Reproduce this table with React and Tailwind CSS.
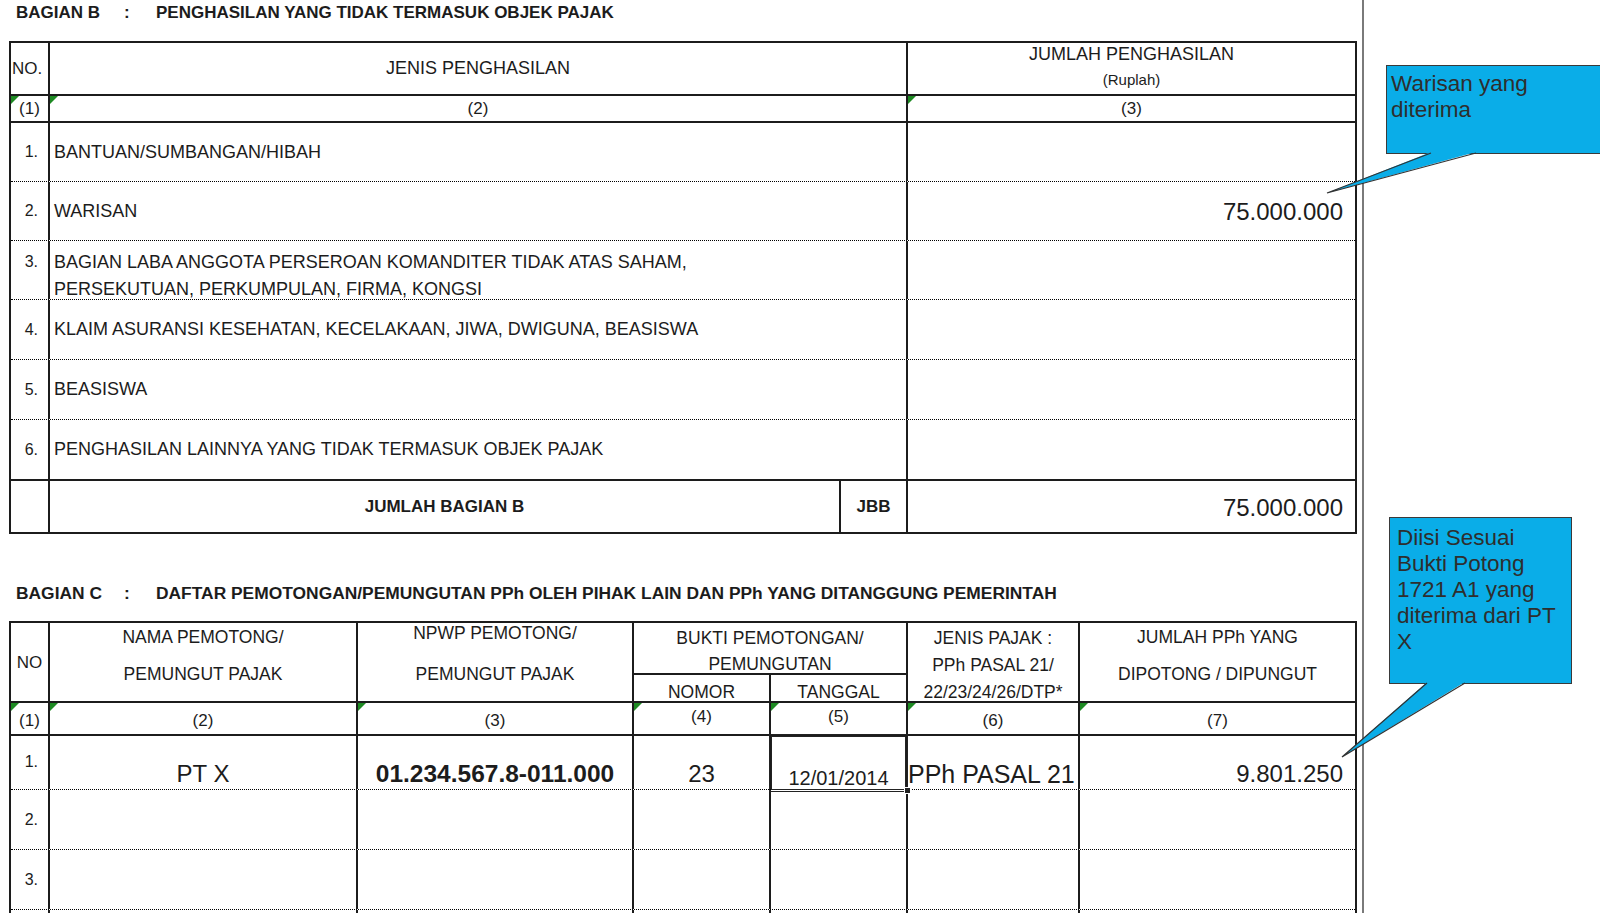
import React from 'react';

const line = 'border-[#1c1c1c]';

function Flag() {
  return (
    <svg className="absolute left-0 top-0" width="8" height="8" viewBox="0 0 8 8">
      <polygon points="0,0 8,0 0,8" fill="#1e8a23" />
    </svg>
  );
}

function SectionTitle({ label, text, size }) {
  return (
    <div className={`flex h-[26px] items-center pl-[16px] font-bold ${size}`}>
      <span className="w-[108px]">{label}</span>
      <span className="w-[32px]">:</span>
      <span>{text}</span>
    </div>
  );
}

const rowsB = [
  { no: '1.', text: ['BANTUAN/SUMBANGAN/HIBAH'], h: 'h-[59px]' },
  { no: '2.', text: ['WARISAN'], value: '75.000.000', h: 'h-[59px]' },
  { no: '3.', text: ['BAGIAN LABA ANGGOTA PERSEROAN KOMANDITER TIDAK ATAS SAHAM,', 'PERSEKUTUAN, PERKUMPULAN, FIRMA, KONGSI'], top: true, h: 'h-[59px]' },
  { no: '4.', text: ['KLAIM ASURANSI KESEHATAN, KECELAKAAN, JIWA, DWIGUNA, BEASISWA'], h: 'h-[60px]' },
  { no: '5.', text: ['BEASISWA'], h: 'h-[60px]' },
  { no: '6.', text: ['PENGHASILAN LAINNYA YANG TIDAK TERMASUK OBJEK PAJAK'], h: 'h-[61px]' },
];

function TableB() {
  return (
    <div className={`ml-[9px] mt-[15px] w-[1348px] border-2 ${line}`}>
      {/* header */}
      <div className={`flex h-[53px] border-b-2 ${line} text-[18px]`}>
        <div className={`flex w-[39px] items-center border-r-2 ${line} pl-[1px] text-[17px]`}>NO.</div>
        <div className={`flex w-[858px] items-center justify-center border-r-2 ${line}`}>JENIS PENGHASILAN</div>
        <div className="flex flex-1 flex-col items-center">
          <div className="mt-[1px] leading-[20px]">JUMLAH PENGHASILAN</div>
          <div className="mt-[7px] text-[15px] leading-[18px]">(Ruplah)</div>
        </div>
      </div>
      {/* index */}
      <div className={`flex h-[27px] border-b-2 ${line} text-[17px]`}>
        <div className={`relative flex w-[39px] items-center justify-center border-r-2 ${line}`}><Flag />(1)</div>
        <div className={`relative flex w-[858px] items-center justify-center border-r-2 ${line}`}><Flag />(2)</div>
        <div className="relative flex flex-1 items-center justify-center"><Flag />(3)</div>
      </div>
      {rowsB.map((r, i) => (
        <div
          key={r.no}
          className={`flex ${r.h} ${i === rowsB.length - 1 ? `border-b-2 ${line}` : 'border-b border-dotted border-black'}`}
        >
          <div className={`flex w-[39px] justify-end border-r-2 ${line} pr-[10px] text-[16px] ${r.top ? 'items-start pt-[9px]' : 'items-center'}`}>
            {r.no}
          </div>
          <div className={`flex w-[858px] flex-col border-r-2 ${line} pl-[4px] text-[18px] ${r.top ? 'justify-start pt-[8px] leading-[27px]' : 'justify-center'}`}>
            {r.text.map((t) => (
              <div key={t}>{t}</div>
            ))}
          </div>
          <div className="flex flex-1 items-center justify-end pr-[12px] pt-[2px] text-[24px]">{r.value}</div>
        </div>
      ))}
      {/* total */}
      <div className="flex h-[51px]">
        <div className={`w-[39px] border-r-2 ${line}`} />
        <div className={`flex w-[791px] items-center justify-center border-r-2 ${line} text-[17px] font-bold`}>
          JUMLAH BAGIAN B
        </div>
        <div className={`flex w-[67px] items-center justify-center border-r-2 ${line} text-[17px] font-bold`}>JBB</div>
        <div className="flex flex-1 items-center justify-end pr-[12px] pt-[2px] text-[24px]">75.000.000</div>
      </div>
    </div>
  );
}

const colsC = ['w-[39px]', 'w-[308px]', 'w-[276px]', 'w-[137px]', 'w-[137px]', 'w-[172px]'];

function EmptyRowC({ no, h }) {
  return (
    <div className={`flex ${h} border-b border-dotted border-black`}>
      <div className={`flex ${colsC[0]} items-center justify-end border-r-2 ${line} pr-[10px] text-[16px]`}>{no}</div>
      {colsC.slice(1).map((c, i) => (
        <div key={i} className={`${c} border-r-2 ${line}`} />
      ))}
      <div className="flex-1" />
    </div>
  );
}

function TableC() {
  return (
    <div className={`ml-[9px] mt-[15px] w-[1348px] border-x-2 border-t-2 ${line}`}>
      {/* header */}
      <div className={`flex h-[80px] border-b-2 ${line} text-[17.5px]`}>
        <div className={`flex w-[39px] items-center justify-center border-r-2 ${line} pt-[2px] text-[17px]`}>NO</div>
        <div className={`flex w-[308px] flex-col items-center border-r-2 ${line}`}>
          <div className="leading-[29px]">NAMA PEMOTONG/</div>
          <div className="mt-[8px] leading-[29px]">PEMUNGUT PAJAK</div>
        </div>
        <div className={`flex w-[276px] flex-col items-center border-r-2 ${line}`}>
          <div className="leading-[21px]">NPWP PEMOTONG/</div>
          <div className="mt-[16px] leading-[29px]">PEMUNGUT PAJAK</div>
        </div>
        <div className={`flex w-[274px] flex-col border-r-2 ${line}`}>
          <div className={`flex h-[52px] flex-col items-center border-b-2 ${line} pt-[2px]`}>
            <div className="leading-[26px]">BUKTI PEMOTONGAN/</div>
            <div className="leading-[26px]">PEMUNGUTAN</div>
          </div>
          <div className="flex flex-1">
            <div className={`flex w-[137px] items-end justify-center border-r-2 ${line} leading-[17px]`}>NOMOR</div>
            <div className="flex flex-1 items-end justify-center leading-[17px]">TANGGAL</div>
          </div>
        </div>
        <div className={`flex w-[172px] flex-col items-center border-r-2 ${line} pt-[2px] leading-[27px]`}>
          <div>JENIS PAJAK :</div>
          <div>PPh PASAL 21/</div>
          <div>22/23/24/26/DTP*</div>
        </div>
        <div className="flex flex-1 flex-col items-center">
          <div className="leading-[29px]">JUMLAH PPh YANG</div>
          <div className="mt-[8px] leading-[29px]">DIPOTONG / DIPUNGUT</div>
        </div>
      </div>
      {/* index */}
      <div className={`flex h-[33px] border-b-2 ${line} text-[17px]`}>
        {['(1)', '(2)', '(3)', '(4)', '(5)', '(6)'].map((t, i) => (
          <div
            key={t}
            className={`relative flex ${colsC[i]} items-center justify-center border-r-2 ${line} ${i === 3 || i === 4 ? 'pb-[4px]' : 'pt-[4px]'}`}
          >
            <Flag />
            {t}
          </div>
        ))}
        <div className="relative flex flex-1 items-center justify-center pt-[4px]">
          <Flag />
          (7)
        </div>
      </div>
      {/* row 1 */}
      <div className="flex h-[54px] border-b border-dotted border-black text-[24px] leading-[30px]">
        <div className={`flex w-[39px] items-start justify-end border-r-2 ${line} pr-[10px] pt-[14px] text-[16px] leading-[24px]`}>1.</div>
        <div className={`flex w-[308px] items-end justify-center border-r-2 ${line}`}>PT X</div>
        <div className={`flex w-[276px] items-end justify-center border-r-2 ${line} text-[24.5px] font-bold`}>01.234.567.8-011.000</div>
        <div className={`flex w-[137px] items-end justify-center border-r-2 ${line}`}>23</div>
        <div className={`relative flex w-[137px] items-end justify-center border-r-2 ${line} text-[20px] leading-[22px]`}>
          12/01/2014
          <div className="absolute -left-[2px] -top-[2px] -right-[2px] -bottom-[3px] border-[3px] border-double border-[#222]" />
          <div className="absolute -bottom-[5px] -right-[5px] h-[7px] w-[7px] border border-white bg-[#222]" />
        </div>
        <div className={`flex w-[172px] items-end whitespace-nowrap border-r-2 ${line} text-[25px]`}>PPh PASAL 21</div>
        <div className="flex flex-1 items-end justify-end pr-[12px]">9.801.250</div>
      </div>
      <EmptyRowC no="2." h="h-[60px]" />
      <EmptyRowC no="3." h="h-[60px]" />
      <EmptyRowC no="" h="h-[60px]" />
    </div>
  );
}

function Callout({ className, children }) {
  return (
    <div className={`absolute border border-[#3a3a3a] bg-[#0aade8] text-[22.5px] leading-[26px] text-[#2e2e2e] ${className}`}>
      {children}
    </div>
  );
}

export default function App() {
  return (
    <div className="relative h-[913px] w-[1600px] overflow-hidden bg-white font-['Liberation_Sans',Arial,sans-serif] text-[#1c1c1c]">
      <div className="h-full w-[1364px] border-r-2 border-[#7a7a7a]">
        <SectionTitle size="text-[17px]" label="BAGIAN B" text="PENGHASILAN YANG TIDAK TERMASUK OBJEK PAJAK" />
        <TableB />
        <div className="mt-[46px]">
          <SectionTitle size="text-[17.4px]" label="BAGIAN C" text="DAFTAR PEMOTONGAN/PEMUNGUTAN PPh OLEH PIHAK LAIN DAN PPh YANG DITANGGUNG PEMERINTAH" />
        </div>
        <TableC />
      </div>

      <Callout className="left-[1386px] top-[65px] h-[89px] w-[222px] pl-[4px] pt-[5px] pr-[8px]">
        Warisan yang diterima
      </Callout>
      <Callout className="left-[1389px] top-[517px] h-[167px] w-[183px] pl-[7px] pt-[7px] pr-[5px]">
        Diisi Sesuai Bukti Potong 1721 A1 yang diterima dari PT X
      </Callout>

      <svg className="pointer-events-none absolute left-0 top-0" width="1600" height="913">
        <polygon points="1431,152 1476,152 1327,193" fill="#0aade8" />
        <polyline points="1431,153 1327,193 1476,153" fill="none" stroke="#333" strokeWidth="1.2" />
        <polygon points="1427,682 1465,682 1342,757" fill="#0aade8" />
        <polyline points="1427,683 1342,757 1465,683" fill="none" stroke="#333" strokeWidth="1.2" />
      </svg>
    </div>
  );
}
